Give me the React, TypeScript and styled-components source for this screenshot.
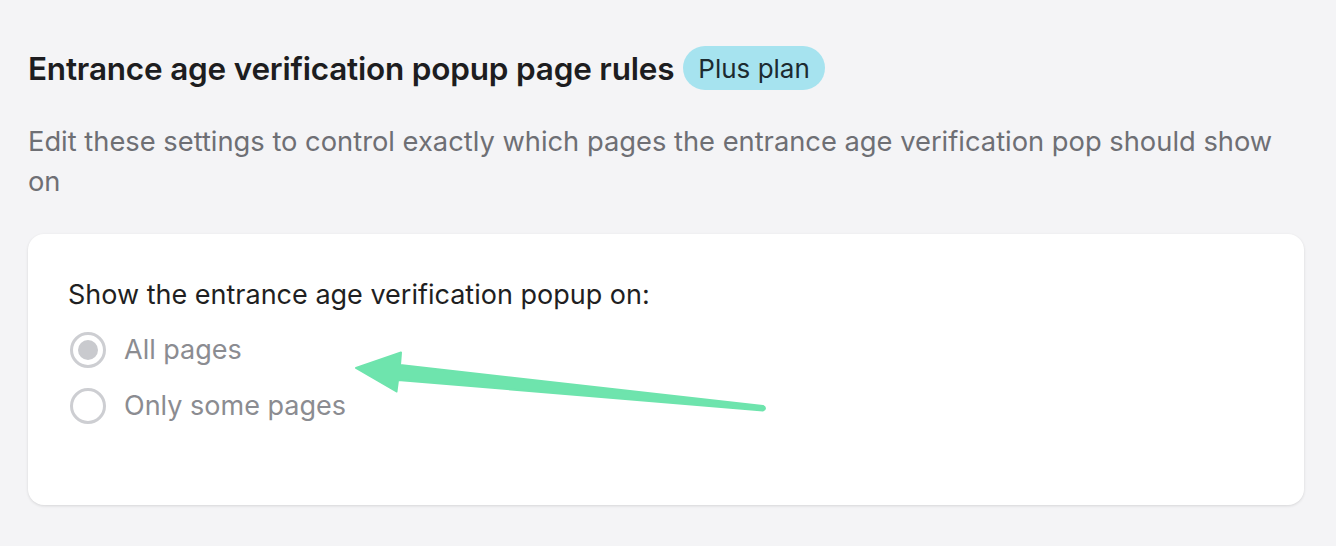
import React from "react";
import styled, { createGlobalStyle } from "styled-components";

const Global = createGlobalStyle`
  html, body { margin: 0; padding: 0; background: #f4f4f6; }
  body { font-family: Inter, "Noto Sans", sans-serif; -webkit-font-smoothing: antialiased; }
`;

const Page = styled.div`
  position: relative;
  padding: 46px 32px 40px 28px;
  box-sizing: border-box;
  width: 1336px;
  height: 546px;
`;

const TitleRow = styled.div`
  display: flex;
  align-items: center;
  gap: 9px;
`;

const Title = styled.h1`
  margin: 0;
  font-size: 31.5px;
  font-weight: 600;
  color: #1d1d20;
  letter-spacing: -0.2px;
`;

const Badge = styled.span`
  display: inline-flex;
  align-items: center;
  height: 44px;
  padding: 0 15px;
  border-radius: 22px;
  background: #a6e3ef;
  color: #1c2b30;
  font-size: 26px;
  font-weight: 400;
`;

const Description = styled.p`
  margin: 32px 0 0;
  font-size: 27.3px;
  line-height: 40px;
  color: #6e6f74;
  max-width: 1262px;
`;

const Card = styled.section`
  margin-top: 32px;
  background: #ffffff;
  border-radius: 16px;
  box-shadow: 0 1px 3px rgba(0, 0, 0, 0.12);
  padding: 43px 40px 81px;
`;

const Question = styled.div`
  font-size: 27px;
  color: #1f1f22;
  line-height: 36px;
  margin-bottom: 19px;
`;

const Options = styled.div`
  display: flex;
  flex-direction: column;
  gap: 20px;
`;

const Option = styled.label`
  display: flex;
  align-items: center;
  gap: 18px;
  font-size: 27px;
  color: #8b8c91;
  line-height: 36px;
`;

const Radio = styled.span<{ $checked?: boolean }>`
  width: 36px;
  height: 36px;
  box-sizing: border-box;
  border-radius: 50%;
  border: 3px solid #cdced2;
  margin-left: 2px;
  display: inline-flex;
  align-items: center;
  justify-content: center;
  &::after {
    content: "";
    width: 20px;
    height: 20px;
    border-radius: 50%;
    background: ${(p) => (p.$checked ? "#c9cace" : "transparent")};
  }
`;

const Arrow = styled.svg`
  position: absolute;
  left: 0;
  top: 0;
  pointer-events: none;
`;

export default function App() {
  return (
    <>
      <Global />
      <Page>
        <TitleRow>
          <Title>Entrance age verification popup page rules</Title>
          <Badge>Plus plan</Badge>
        </TitleRow>
        <Description>
          Edit these settings to control exactly which pages the entrance age verification pop should show on
        </Description>
        <Card>
          <Question>Show the entrance age verification popup on:</Question>
          <Options>
            <Option>
              <Radio $checked />
              All pages
            </Option>
            <Option>
              <Radio />
              Only some pages
            </Option>
          </Options>
        </Card>
        <Arrow width="1336" height="546" viewBox="0 0 1336 546">
          <path
            d="M356 368 L401 352.5 L400 365 L763 406 Q767 408 763 410.5 L398 380 L396.5 391.5 Z"
            fill="#6ee4ad"
            stroke="#6ee4ad"
            strokeWidth="2"
            strokeLinejoin="round"
          />
        </Arrow>
      </Page>
    </>
  );
}
